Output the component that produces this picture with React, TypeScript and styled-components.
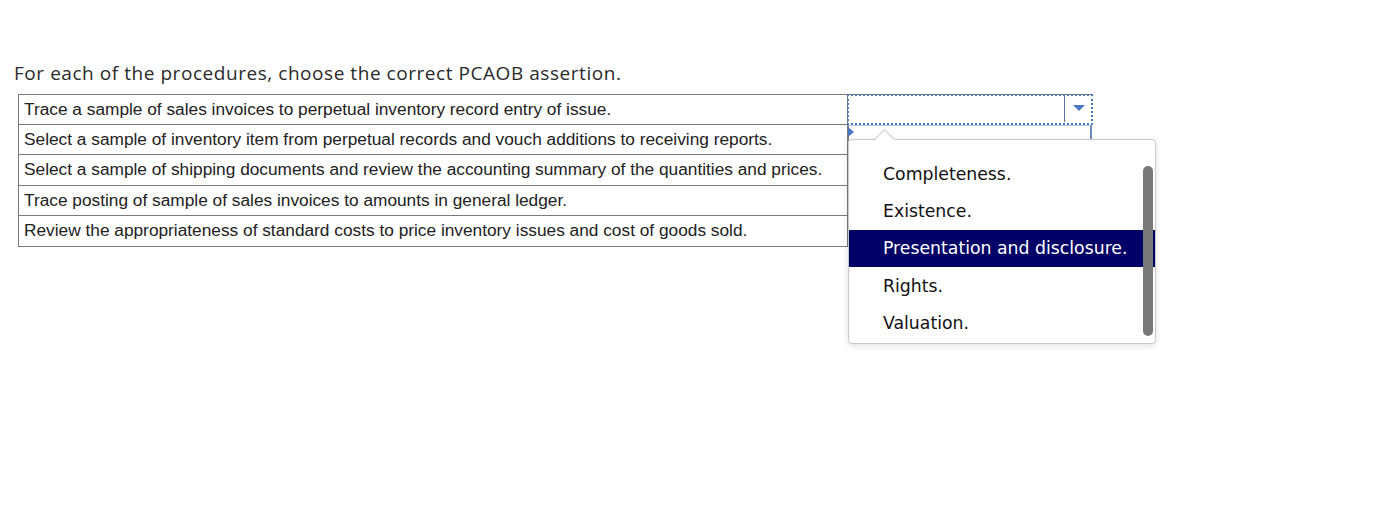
import React from "react";
import styled, { createGlobalStyle } from "styled-components";

const Global = createGlobalStyle`
  html, body { margin: 0; padding: 0; background: #fff; }
  body { font-family: "Liberation Sans", Arial, sans-serif; }
`;

const Page = styled.div`
  padding: 60px 0 0 14px;
  position: relative;
  height: 522px;
  box-sizing: border-box;
`;

const Heading = styled.h1`
  margin: 0 0 7px 0;
  font-family: "Open Sans", "Liberation Sans", sans-serif;
  font-weight: 400;
  font-size: 19px;
  letter-spacing: 0.55px;
  line-height: 27px;
  color: #2a2a2a;
`;

const Table = styled.div`
  margin-left: 4px;
  display: grid;
  grid-template-columns: 830px 245px;
  width: 1075px;
  position: relative;
`;

const Cell = styled.div<{ $first: boolean }>`
  height: 30.5px;
  box-sizing: border-box;
  border: 1px solid #7a7a7a;
  border-top: ${(p) => (p.$first ? "1px solid #7a7a7a" : "none")};
  display: flex;
  align-items: center;
  padding: 0 0 0 5px;
  font-family: "Liberation Sans", Arial, sans-serif;
  font-size: 17.3px;
  color: #222;
  white-space: nowrap;
`;

const SelectCell = styled.div<{ $first: boolean }>`
  height: 30.5px;
  box-sizing: border-box;
  display: flex;
  border-top: ${(p) => (p.$first ? "1px solid #7a7a7a" : "none")};
`;

const SelectBox = styled.div`
  flex: 1;
  margin: -1px 0 0 -1px;
  box-sizing: border-box;
  border: 2px dotted #4a78c2;
  display: flex;
  justify-content: flex-end;
`;

const Trigger = styled.div`
  width: 26px;
  margin: 0 0 1px 0;
  border-left: 1px solid #5676a8;
  display: flex;
  align-items: center;
  justify-content: center;
`;

const Arrow = styled.span`
  width: 0;
  height: 0;
  border-left: 6px solid transparent;
  border-right: 6px solid transparent;
  border-top: 6px solid #4a78c2;
  margin-top: -2px;
  margin-left: 1px;
`;

const ListBehind = styled.div`
  position: absolute;
  left: 830px;
  top: 31px;
  width: 244px;
  height: 16px;
  box-sizing: border-box;
  border-top: 1px solid #b8c9e4;
  border-right: 2px solid #6b8cc4;
  border-left: 1px solid #7a7a7a;
`;

const Marker = styled.span`
  position: absolute;
  left: -1px;
  top: 1px;
  width: 0;
  height: 0;
  border-top: 5px solid transparent;
  border-bottom: 5px solid transparent;
  border-left: 6px solid #4a78c2;
`;

const Popup = styled.div`
  position: absolute;
  left: 848px;
  top: 139px;
  width: 308px;
  height: 205px;
  box-sizing: border-box;
  background: #fff;
  border: 1px solid #c9c9c9;
  border-radius: 4px;
  box-shadow: 0 2px 6px rgba(0, 0, 0, 0.12);
  padding-top: 15px;
  display: flex;
  flex-direction: column;
  font-family: "DejaVu Sans", Verdana, sans-serif;

  &::before {
    content: "";
    position: absolute;
    left: 28px;
    top: -8px;
    width: 14px;
    height: 14px;
    background: #fff;
    border-left: 1px solid #c9c9c9;
    border-top: 1px solid #c9c9c9;
    transform: rotate(45deg);
  }
`;

const Option = styled.div<{ $active: boolean }>`
  height: 37.3px;
  flex: none;
  box-sizing: border-box;
  display: flex;
  align-items: center;
  padding-left: 34px;
  font-size: 17.3px;
  color: ${(p) => (p.$active ? "#fff" : "#111")};
  background: ${(p) => (p.$active ? "#000066" : "transparent")};
`;

const Thumb = styled.div`
  position: absolute;
  right: 2px;
  top: 26px;
  width: 10px;
  height: 170px;
  border-radius: 5px;
  background: #787878;
`;

const procedures = [
  "Trace a sample of sales invoices to perpetual inventory record entry of issue.",
  "Select a sample of inventory item from perpetual records and vouch additions to receiving reports.",
  "Select a sample of shipping documents and review the accounting summary of the quantities and prices.",
  "Trace posting of sample of sales invoices to amounts in general ledger.",
  "Review the appropriateness of standard costs to price inventory issues and cost of goods sold.",
];

const options = [
  "Completeness.",
  "Existence.",
  "Presentation and disclosure.",
  "Rights.",
  "Valuation.",
];

export default function App() {
  return (
    <>
      <Global />
      <Page>
        <Heading>For each of the procedures, choose the correct PCAOB assertion.</Heading>
        <Table>
          {procedures.map((p, i) => (
            <React.Fragment key={i}>
              <Cell $first={i === 0}>{p}</Cell>
              <SelectCell $first={i === 0}>
                {i === 0 && (
                  <SelectBox>
                    <Trigger>
                      <Arrow />
                    </Trigger>
                  </SelectBox>
                )}
              </SelectCell>
            </React.Fragment>
          ))}
          <ListBehind>
            <Marker />
          </ListBehind>
        </Table>
        <Popup>
          {options.map((o, i) => (
            <Option key={o} $active={i === 2}>
              {o}
            </Option>
          ))}
          <Thumb />
        </Popup>
      </Page>
    </>
  );
}
